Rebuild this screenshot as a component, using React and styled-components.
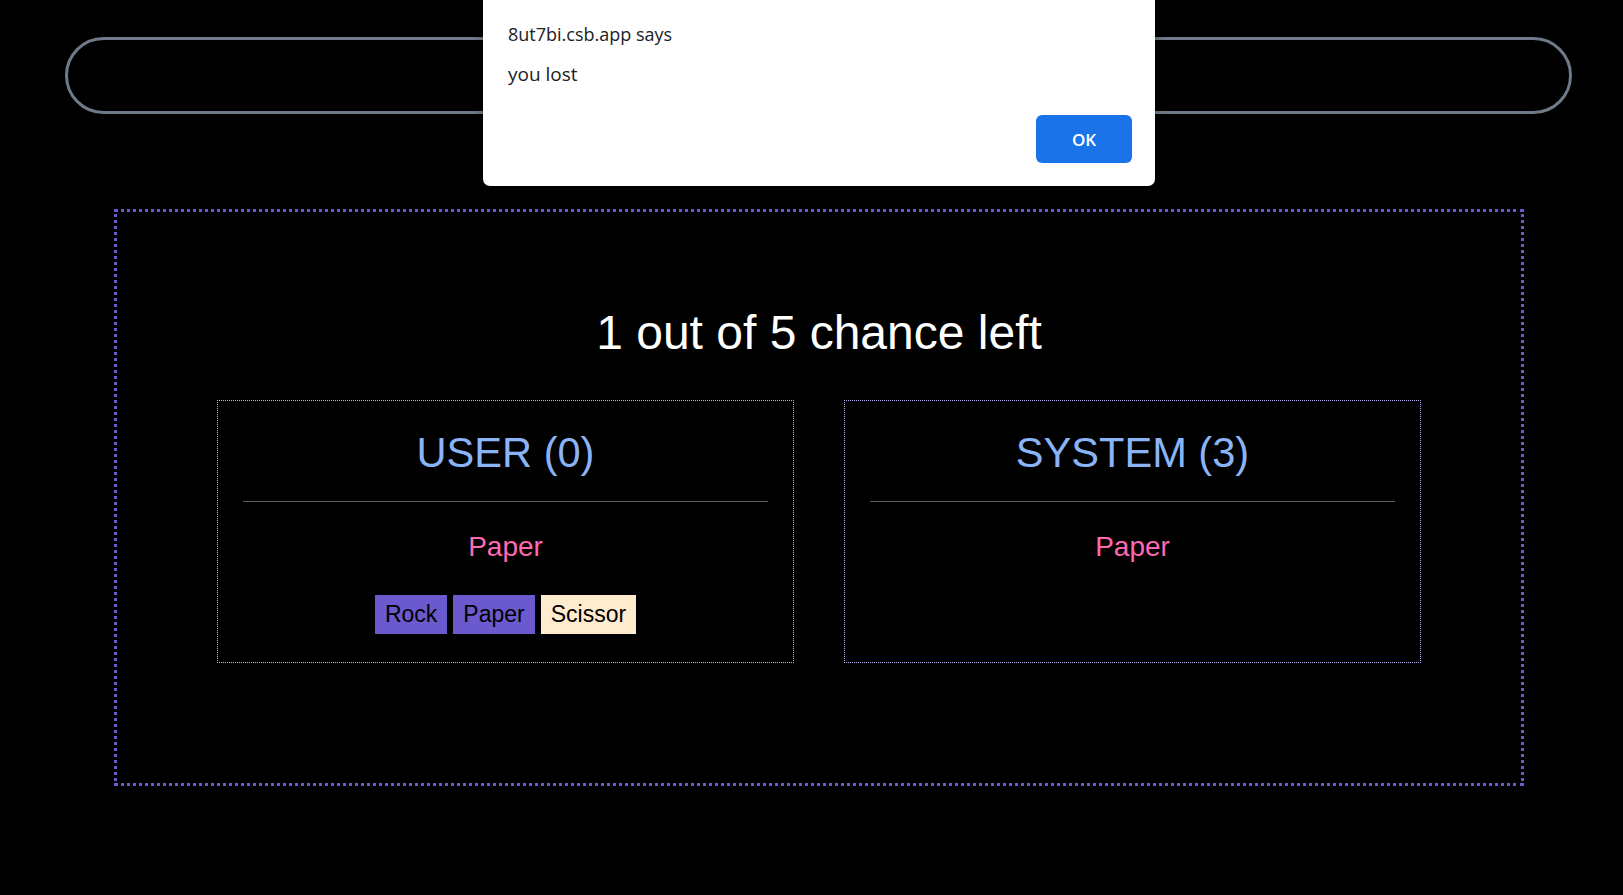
import React from "react";
import styled, { createGlobalStyle } from "styled-components";

const Global = createGlobalStyle`
  html, body {
    margin: 0;
    padding: 0;
    background: #000;
  }
  body {
    font-family: "Liberation Sans", Arial, sans-serif;
    color: #fff;
  }
  * { box-sizing: border-box; }
`;

const Page = styled.div`
  position: relative;
  min-height: 895px;
  padding-top: 37px;
  background: #000;
`;

const SearchPill = styled.div`
  height: 77px;
  margin: 0 51px 0 65px;
  border: 3px solid #6f7b88;
  border-radius: 999px;
`;

const Board = styled.main`
  margin: 95px 99px 0 114px;
  padding: 93px 0 120px;
  border: 3px dotted #6a5acd;
  display: flex;
  flex-direction: column;
  align-items: center;
`;

const Headline = styled.h1`
  margin: 0 0 39px;
  font-size: 48px;
  line-height: 56px;
  font-weight: 400;
  color: #fff;
  text-align: center;
`;

const Players = styled.div`
  display: flex;
  justify-content: center;
  gap: 50px;
  width: 100%;
`;

const Card = styled.section`
  width: 577px;
  height: 263px;
  padding: 28px 25px 27px;
  border: 1px dotted #b4b4f6;
  display: flex;
  flex-direction: column;
  align-items: center;
`;

const CardTitle = styled.h2`
  margin: 0 0 24px;
  font-size: 41.6px;
  line-height: 48px;
  font-weight: 400;
  color: #8ab4f8;
  text-align: center;
`;

const Divider = styled.hr`
  width: 100%;
  margin: 0 0 29px;
  border: 0;
  height: 1px;
  background: #5a5a5a;
`;

const Choice = styled.div`
  font-size: 28px;
  line-height: 32px;
  color: #ff69b4;
  text-align: center;
`;

const Buttons = styled.div`
  margin-top: 32px;
  display: flex;
  gap: 6px;
  justify-content: center;
`;

const MoveButton = styled.button`
  height: 39px;
  padding: 0 10px;
  border: 0;
  border-radius: 0;
  font-family: "Liberation Sans", Arial, sans-serif;
  font-size: 23px;
  color: #000;
  background: ${(p) => (p.$light ? "#ffebcd" : "#6a5acd")};
  cursor: pointer;
`;

const Dialog = styled.div`
  position: absolute;
  top: 0;
  left: 483px;
  width: 672px;
  height: 186px;
  padding: 20px 23px 23px 25px;
  background: #fff;
  border-radius: 0 0 7px 7px;
  box-shadow: 0 3px 12px rgba(0, 0, 0, 0.35);
  display: flex;
  flex-direction: column;
  font-family: "Open Sans", "Noto Sans", sans-serif;
  color: #202124;
`;

const DialogTitle = styled.div`
  font-size: 18px;
  line-height: 28px;
`;

const DialogMessage = styled.div`
  margin-top: 14px;
  font-size: 19px;
  line-height: 24px;
`;

const DialogActions = styled.div`
  margin-top: auto;
  display: flex;
  justify-content: flex-end;
`;

const OkButton = styled.button`
  width: 96px;
  height: 48px;
  border: 0;
  border-radius: 6px;
  background: #1a73e8;
  color: #fff;
  font-family: "Open Sans", "Noto Sans", sans-serif;
  font-weight: 600;
  font-size: 17px;
  cursor: pointer;
`;

function PlayerCard({ title, choice, children }) {
  return (
    <Card>
      <CardTitle>{title}</CardTitle>
      <Divider />
      <Choice>{choice}</Choice>
      {children}
    </Card>
  );
}

export default function App() {
  return (
    <Page>
      <Global />
      <SearchPill />
      <Board>
        <Headline>1 out of 5 chance left</Headline>
        <Players>
          <PlayerCard title="USER (0)" choice="Paper">
            <Buttons>
              <MoveButton>Rock</MoveButton>
              <MoveButton>Paper</MoveButton>
              <MoveButton $light>Scissor</MoveButton>
            </Buttons>
          </PlayerCard>
          <PlayerCard title="SYSTEM (3)" choice="Paper" />
        </Players>
      </Board>
      <Dialog role="alertdialog">
        <DialogTitle>8ut7bi.csb.app says</DialogTitle>
        <DialogMessage>you lost</DialogMessage>
        <DialogActions>
          <OkButton>OK</OkButton>
        </DialogActions>
      </Dialog>
    </Page>
  );
}
